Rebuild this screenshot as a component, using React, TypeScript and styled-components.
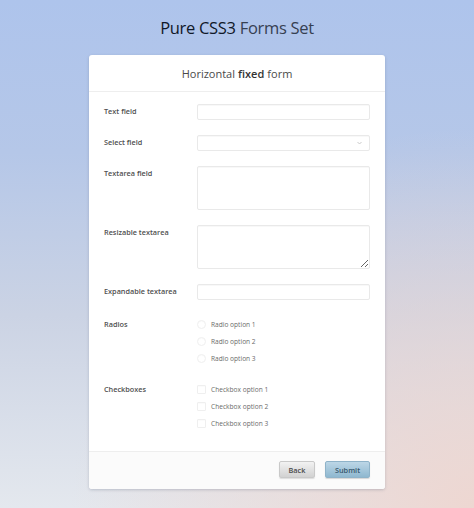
import styled, { createGlobalStyle, css } from "styled-components";

const GlobalStyle = createGlobalStyle`
  html, body {
    margin: 0;
    padding: 0;
    height: 100%;
  }
  body {
    font-family: "Open Sans", "Liberation Sans", sans-serif;
    background:
      radial-gradient(ellipse 85% 75% at 100% 100%, rgba(238, 214, 208, 0.95), rgba(238, 214, 208, 0) 100%),
      linear-gradient(to bottom, #aec4ec 0%, #b5c7e8 30%, #cbd3e4 62%, #e4e8ee 100%);
  }
  #root {
    min-height: 508px;
  }
`;

const Page = styled.div`
  display: flex;
  flex-direction: column;
  align-items: center;
`;

const Title = styled.h1`
  margin: 0;
  height: 55px;
  display: flex;
  align-items: center;
  justify-content: center;
  font-size: 16.5px;
  font-weight: 400;
  color: #364052;
  letter-spacing: -0.3px;

  strong {
    font-weight: 500;
    color: #101828;
    margin-right: 4px;
  }
`;

const Card = styled.form`
  width: 296px;
  background: #fff;
  border-radius: 3px;
  box-shadow: 0 1px 3px rgba(60, 70, 100, 0.25);
  overflow: hidden;
`;

const CardHeader = styled.div`
  height: 36px;
  display: flex;
  align-items: center;
  justify-content: center;
  border-bottom: 1px solid #eeeeee;
  font-size: 11px;
  color: #4a4a4a;

  b {
    font-weight: 600;
    color: #333;
    margin: 0 3px;
  }
`;

const CardBody = styled.div`
  display: flex;
  flex-direction: column;
  gap: 15px;
  padding: 12px 15px 21px;
`;

const Row = styled.div<{ $extra?: number }>`
  display: grid;
  grid-template-columns: 93px 1fr;
  margin-top: ${(p) => p.$extra ?? 0}px;
`;

const Label = styled.label`
  font-size: 7.3px;
  line-height: 14px;
  font-weight: 600;
  color: #4f4f4f;
`;

const fieldBase = css`
  box-sizing: border-box;
  width: 100%;
  margin: 0;
  border: 1px solid #e9e9e9;
  border-radius: 2px;
  background: #fff;
  box-shadow: inset 0 1px 1px rgba(0, 0, 0, 0.03);
  font-family: inherit;
  font-size: 8px;
  outline: none;
`;

const TextInput = styled.input`
  ${fieldBase}
  height: 16px;
  padding: 0 5px;
`;

const SelectBox = styled.div`
  ${fieldBase}
  height: 16px;
  display: flex;
  align-items: center;
  justify-content: flex-end;
  padding-right: 7px;
`;

const TextArea = styled.textarea<{ $resizable?: boolean }>`
  ${fieldBase}
  display: block;
  height: 44px;
  padding: 4px 5px;
  resize: ${(p) => (p.$resizable ? "vertical" : "none")};
`;

const Options = styled.div`
  display: flex;
  flex-direction: column;
  gap: 3px;
`;

const Option = styled.label`
  display: flex;
  align-items: center;
  height: 14px;
  gap: 5px;
  font-size: 6.6px;
  color: #6a6a6a;
`;

const Mark = styled.span<{ $round?: boolean }>`
  box-sizing: border-box;
  width: 9px;
  height: 9px;
  border: 1px solid #efefef;
  border-radius: ${(p) => (p.$round ? "50%" : "1px")};
  background: #fff;
  box-shadow: inset 0 1px 1px rgba(0, 0, 0, 0.02);
  flex-shrink: 0;
`;

const CardFooter = styled.div`
  display: flex;
  justify-content: flex-end;
  gap: 10px;
  padding: 9px 15px 11px;
  border-top: 1px solid #eeeeee;
  background: #fbfbfb;
`;

const Button = styled.button<{ $primary?: boolean }>`
  height: 17px;
  padding: 0;
  border-radius: 2px;
  font-family: inherit;
  font-size: 7.3px;
  font-weight: 600;
  cursor: pointer;
  ${(p) =>
    p.$primary
      ? css`
          width: 45px;
          color: #35556b;
          border: 1px solid #8fb3c9;
          background: linear-gradient(to bottom, #bcd6e6, #8fb8d0);
          box-shadow: 0 1px 1px rgba(0, 0, 0, 0.15);
        `
      : css`
          width: 36px;
          color: #4a4a4a;
          border: 1px solid #c9c9c9;
          background: linear-gradient(to bottom, #f2f2f2, #d2d2d2);
          box-shadow: 0 1px 1px rgba(0, 0, 0, 0.12);
        `}
`;

const radios = ["Radio option 1", "Radio option 2", "Radio option 3"];
const checks = ["Checkbox option 1", "Checkbox option 2", "Checkbox option 3"];

const App = () => {
  return (
    <Page>
      <GlobalStyle />
      <Title>
        <strong>Pure CSS3</strong>Forms Set
      </Title>
      <Card onSubmit={(e) => e.preventDefault()}>
        <CardHeader>
          Horizontal<b>fixed</b>form
        </CardHeader>
        <CardBody>
          <Row>
            <Label>Text field</Label>
            <TextInput type="text" />
          </Row>
          <Row>
            <Label>Select field</Label>
            <SelectBox>
              <svg width="5" height="4" viewBox="0 0 5 4">
                <path d="M0.5 1 L2.5 3 L4.5 1" stroke="#c4c4c4" strokeWidth="0.9" fill="none" />
              </svg>
            </SelectBox>
          </Row>
          <Row>
            <Label>Textarea field</Label>
            <TextArea />
          </Row>
          <Row>
            <Label>Resizable textarea</Label>
            <TextArea $resizable />
          </Row>
          <Row>
            <Label>Expandable textarea</Label>
            <TextInput type="text" />
          </Row>
          <Row $extra={2}>
            <Label>Radios</Label>
            <Options>
              {radios.map((r) => (
                <Option key={r}>
                  <Mark $round />
                  {r}
                </Option>
              ))}
            </Options>
          </Row>
          <Row $extra={2}>
            <Label>Checkboxes</Label>
            <Options>
              {checks.map((c) => (
                <Option key={c}>
                  <Mark />
                  {c}
                </Option>
              ))}
            </Options>
          </Row>
        </CardBody>
        <CardFooter>
          <Button type="button">Back</Button>
          <Button type="submit" $primary>
            Submit
          </Button>
        </CardFooter>
      </Card>
    </Page>
  );
};

export default App;
